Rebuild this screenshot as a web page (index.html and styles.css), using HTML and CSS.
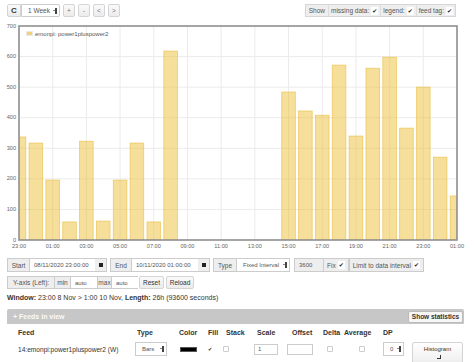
FILE: index.html
```html
<!DOCTYPE html>
<html lang="en">

<head>
    <meta charset="UTF-8" />
    <title>Graph - emonpi power</title>
    <link rel="stylesheet" href="styles.css">
</head>

<body>
    <div class="toolbar">
        <div class="nav">
            <span class="btn btn-refresh">C</span>
            <span class="select sel-period">1 Week<i class="arrow"></i></span>
            <span class="btn btn-sm">+</span>
            <span class="btn btn-sm">-</span>
            <span class="btn btn-sm">&lt;</span>
            <span class="btn btn-sm">&gt;</span>
        </div>
        <div class="show-group">
            <span class="addon">Show</span>
            <span class="addon">missing data: <b class="tick">✔</b></span>
            <span class="addon">legend: <b class="tick">✔</b></span>
            <span class="addon">feed tag: <b class="tick">✔</b></span>
        </div>
    </div>

    <svg id="plot" class="plot" width="474" height="230" viewBox="0 0 474 230"></svg>

    <div class="controls">
        <div class="row">
            <div class="group">
                <span class="addon w-start">Start</span>
                <span class="field w-date">08/11/2020 23:00:00</span>
                <span class="addon w-icon"><i class="cal"></i></span>
            </div>
            <div class="group">
                <span class="addon w-end">End</span>
                <span class="field w-date2">10/11/2020 01:00:00</span>
                <span class="addon w-icon"><i class="cal"></i></span>
            </div>
            <div class="group">
                <span class="addon w-type">Type</span>
                <span class="select w-mode">Fixed Interval<i class="arrow"></i></span>
            </div>
            <div class="group">
                <span class="field field-off w-interval">3600</span>
                <span class="addon">Fix <b class="tick">✔</b></span>
                <span class="addon">Limit to data interval <b class="tick">✔</b></span>
            </div>
        </div>

        <div class="row row-y">
            <div class="group">
                <span class="addon w-yaxis">Y-axis (Left):</span>
                <span class="addon w-min">min</span>
                <span class="field w-auto">auto</span>
                <span class="addon w-max">max</span>
                <span class="field w-auto">auto</span>
            </div>
            <span class="btn w-reset">Reset</span>
            <span class="btn w-reload">Reload</span>
        </div>

        <p class="window"><strong>Window:</strong> 23:00 8 Nov &gt; 1:00 10 Nov, <strong>Length:</strong> 26h (93600 seconds)</p>
    </div>

    <div class="panel">
        <div class="panel-head">
            <span class="panel-title">+ Feeds in view</span>
            <span class="btn btn-stats">Show statistics</span>
        </div>
        <div class="feeds">
            <div class="feed-row feed-head">
                <span>Feed</span>
                <span class="p2">Type</span>
                <span class="p1">Color</span>
                <span class="p3">Fill</span>
                <span class="p4">Stack</span>
                <span class="p5">Scale</span>
                <span class="p6">Offset</span>
                <span class="p3">Delta</span>
                <span class="p1">Average</span>
                <span class="p2">DP</span>
                <span></span>
            </div>
            <div class="feed-row feed-data">
                <span class="feed-name">14:emonpi:power1pluspower2 (W)</span>
                <span><span class="select w-bars">Bars<i class="arrow"></i></span></span>
                <span class="p2"><i class="swatch"></i></span>
                <span class="p2"><b class="cb">✔</b></span>
                <span class="p1"><b class="cb"></b></span>
                <span class="p2"><span class="field w-scale">1</span></span>
                <span class="p1"><span class="field w-offset"></span></span>
                <span class="p7"><b class="cb"></b></span>
                <span class="p16"><b class="cb"></b></span>
                <span class="p2"><span class="select w-dp">0<i class="arrow"></i></span></span>
                <span class="p2"><span class="btn btn-hist">Histogram<i class="hist-icon"></i></span></span>
            </div>
        </div>
    </div>

    <script>
        const values = [337, 317, 196, 59, 323, 62, 196, 317, 59, 618,
            null, null, null, null, null, null,
            484, 422, 408, 572, 340, 562, 598, 366, 500, 271, 144];
        const hourLabels = ["23:00", "01:00", "03:00", "05:00", "07:00", "09:00", "11:00",
            "13:00", "15:00", "17:00", "19:00", "21:00", "23:00", "01:00"];

        const L = 19, T = 6, R = 457, B = 220, HOURS = 26, YMAX = 700;
        const px = h => L + (R - L) * h / HOURS;
        const py = v => B - (B - T) * v / YMAX;

        const svg = document.getElementById("plot");
        const NS = "http://www.w3.org/2000/svg";

        function el(tag, attrs, text) {
            const node = document.createElementNS(NS, tag);
            for (const k in attrs) node.setAttribute(k, attrs[k]);
            if (text !== undefined) node.textContent = text;
            svg.appendChild(node);
            return node;
        }

        // clip for bars
        const defs = el("defs", {});
        const clip = document.createElementNS(NS, "clipPath");
        clip.setAttribute("id", "area");
        const clipRect = document.createElementNS(NS, "rect");
        clipRect.setAttribute("x", L);
        clipRect.setAttribute("y", T);
        clipRect.setAttribute("width", R - L);
        clipRect.setAttribute("height", B - T);
        clip.appendChild(clipRect);
        defs.appendChild(clip);

        // grid
        for (let v = 100; v < YMAX; v += 100) {
            el("line", { x1: L, x2: R, y1: py(v), y2: py(v), class: "grid" });
        }
        for (let h = 2; h < HOURS; h += 2) {
            el("line", { x1: px(h), x2: px(h), y1: T, y2: B, class: "grid" });
        }

        // bars
        values.forEach((v, i) => {
            if (v === null) return;
            el("rect", {
                x: px(i) - 6.8, y: py(v), width: 13.6, height: B - py(v),
                class: "bar", "clip-path": "url(#area)"
            });
        });

        // border
        el("rect", { x: L, y: T, width: R - L, height: B - T, class: "frame" });

        // y labels
        for (let v = 0; v <= YMAX; v += 100) {
            el("text", { x: 16, y: py(v) + 1.6, class: "lbl", "text-anchor": "end" }, v);
        }
        // x labels
        hourLabels.forEach((t, k) => {
            el("text", { x: px(k * 2), y: 228, class: "lbl", "text-anchor": "middle" }, t);
        });

        // legend
        el("rect", { x: 26.5, y: 11.5, width: 6, height: 4, class: "legend-box" });
        el("text", { x: 35, y: 15.5, class: "legend" }, "emonpi: power1pluspower2");
    </script>
</body>

</html>
```

FILE: styles.css
```css
body {
    font-family: 'Liberation Sans', Arial, sans-serif;
    font-size: 7px;
    color: #333;
    background: #fff;
    margin: 0;
    padding: 0;
    width: 474px;
    overflow: hidden;
}

/* top bar */
.toolbar {
    display: flex;
    justify-content: space-between;
    align-items: center;
    height: 13px;
    padding: 4px 18px 0 7px;
}

.nav {
    display: flex;
    align-items: center;
}

.btn {
    display: inline-flex;
    align-items: center;
    justify-content: center;
    box-sizing: border-box;
    height: 13px;
    border: 1px solid #d4d4d4;
    border-radius: 2px;
    background: linear-gradient(#fafafa, #ececec);
    color: #333;
    font-size: 6.5px;
}

.btn-refresh {
    width: 14px;
    font-weight: bold;
    font-size: 8px;
    border-radius: 2px 0 0 2px;
}

.btn-sm {
    width: 12px;
    margin-left: 3px;
    color: #777;
}

.sel-period {
    width: 39px;
    border-radius: 0 2px 2px 0;
    border-left: none;
}

.select {
    position: relative;
    display: inline-flex;
    align-items: center;
    box-sizing: border-box;
    height: 13px;
    padding-left: 6px;
    border: 1px solid #ccc;
    background: #fff;
    color: #555;
    font-size: 6.5px;
}

.arrow {
    position: absolute;
    right: 2px;
    top: 3px;
    width: 2px;
    height: 6px;
    background: #444;
}

.arrow::before {
    content: "";
    position: absolute;
    left: -2px;
    top: 2px;
    width: 2px;
    height: 1px;
    background: #888;
}

.show-group {
    display: flex;
    height: 13px;
    border: 1px solid #d6d6d6;
    box-sizing: border-box;
    background: #eee;
}

.show-group .addon {
    border: none;
    border-left: 1px solid #ddd;
    padding: 0 2px;
    height: 11px;
}

.show-group .addon:first-child {
    border-left: none;
    padding: 0 3px;
}

.addon {
    display: inline-flex;
    align-items: center;
    justify-content: center;
    box-sizing: border-box;
    height: 13px;
    padding: 0 3px;
    border: 1px solid #ccc;
    background: #eee;
    color: #555;
    white-space: nowrap;
    font-size: 6.5px;
}

.tick {
    display: inline-block;
    margin-left: 2px;
    padding: 0 1px;
    background: #fff;
    font-family: 'DejaVu Sans', sans-serif;
    font-size: 6px;
    line-height: 8px;
    color: #222;
}

/* chart */
.plot {
    display: block;
    margin-top: 3px;
}

.grid {
    stroke: #ebebeb;
    stroke-width: 1;
}

.bar {
    fill: rgba(237, 194, 64, 0.52);
    stroke: rgba(233, 190, 70, 0.75);
    stroke-width: 0.8;
}

.frame {
    fill: none;
    stroke: #8f8f8f;
    stroke-width: 1.6;
}

.lbl {
    font-size: 5.6px;
    fill: #666;
}

.legend {
    font-size: 6px;
    fill: #555;
}

.legend-box {
    fill: #edc240;
    opacity: 0.7;
    stroke: #e0e0e0;
}

/* controls below chart */
.controls {
    padding: 8px 7px 0;
}

.row {
    display: flex;
    height: 14px;
}

.row .addon,
.row .field,
.row .select {
    height: 14px;
}

.group {
    display: flex;
    margin-right: 3px;
}

.field {
    display: inline-flex;
    align-items: center;
    box-sizing: border-box;
    height: 13px;
    padding-left: 4px;
    border: 1px solid #ccc;
    border-left: none;
    border-right: none;
    background: #fff;
    color: #555;
    white-space: nowrap;
    font-size: 6px;
}

.field-off {
    background: #eee;
    border-left: 1px solid #ccc;
    margin-left: 1px;
}

.w-start { width: 23px; }
.w-date { width: 65px; }
.w-date2 { width: 66px; }
.w-icon { width: 12px; border-left: none; }
.w-end { width: 22px; }
.w-type { width: 24px; }
.w-mode { width: 53px; border-left: none; font-size: 6px; }
.w-interval { width: 29px; }

.cal {
    display: block;
    width: 4px;
    height: 4px;
    background: #222;
}

.row-y {
    margin-top: 4px;
    height: 13px;
}

.row-y .addon,
.row-y .field {
    height: 13px;
}

.w-yaxis { width: 48px; }
.w-min { width: 16px; border-left: none; }
.w-max { width: 15px; }
.w-auto { width: 26px; }

.w-reset {
    width: 25px;
    margin-left: -2px;
}

.w-reload {
    width: 28px;
    margin-left: 2px;
}

.window {
    margin: 4px 0 0;
    line-height: 9px;
    color: #333;
}

/* feeds panel */
.panel {
    margin: 7px 10px 0 7px;
}

.panel-head {
    display: flex;
    justify-content: space-between;
    align-items: center;
    height: 15px;
    padding: 0 1px 0 6px;
    background: #c7c7c7;
    border-radius: 2px 2px 0 0;
}

.panel-title {
    color: #fff;
    font-weight: bold;
    opacity: 0.9;
}

.btn-stats {
    width: 55px;
    height: 12px;
    font-weight: bold;
    font-size: 6.5px;
    background: #f6f6f6;
    border-color: #bbb;
}

.feed-row {
    display: grid;
    grid-template-columns: 117px 43px 27px 17px 30px 34px 34px 23px 38px 29px 53px;
    align-items: center;
    padding-left: 11px;
}

.feed-head {
    height: 17px;
    font-weight: bold;
    color: #333;
}

.feed-data {
    height: 22px;
    align-items: start;
    padding-top: 1px;
}

.feed-data > span {
    display: flex;
    align-items: center;
    height: 14px;
}

.feed-name {
    font-size: 6.6px;
}

.p1 { padding-left: 1px; }
.p2 { padding-left: 2px; }
.p3 { padding-left: 3px; }
.p4 { padding-left: 4px; }
.p5 { padding-left: 5px; }
.p6 { padding-left: 6px; }
.p7 { padding-left: 7px; }
.p16 { padding-left: 16px; }

.w-bars {
    width: 32px;
    height: 14px;
    font-size: 6px;
}

.w-dp {
    width: 21px;
    height: 14px;
    font-size: 6px;
}

.swatch {
    display: block;
    width: 15px;
    height: 3px;
    background: #000;
    border: 1px solid #555;
}

.cb {
    display: inline-flex;
    align-items: center;
    justify-content: center;
    box-sizing: border-box;
    width: 6px;
    height: 6px;
    border: 1px solid #ccc;
    border-radius: 1px;
    background: #fff;
    font-family: 'DejaVu Sans', sans-serif;
    font-size: 5px;
    color: #222;
}

.cb:not(:empty) {
    border-color: #fff;
}

.w-scale {
    width: 24px;
    height: 11px;
    border: 1px solid #ccc;
    padding-left: 3px;
}

.w-offset {
    width: 26px;
    height: 11px;
    border: 1px solid #ccc;
}

.feed-data .p2:last-child {
    height: 22px;
    align-items: flex-start;
}

.btn-hist {
    position: relative;
    width: 51px;
    height: 22px;
    align-items: flex-start;
    padding-top: 3px;
    font-size: 6px;
    background: linear-gradient(#fff, #eee);
}

.hist-icon {
    position: absolute;
    left: 24px;
    top: 12px;
    width: 3px;
    height: 3px;
    border-right: 1px solid #333;
    border-bottom: 1px solid #333;
}
```
